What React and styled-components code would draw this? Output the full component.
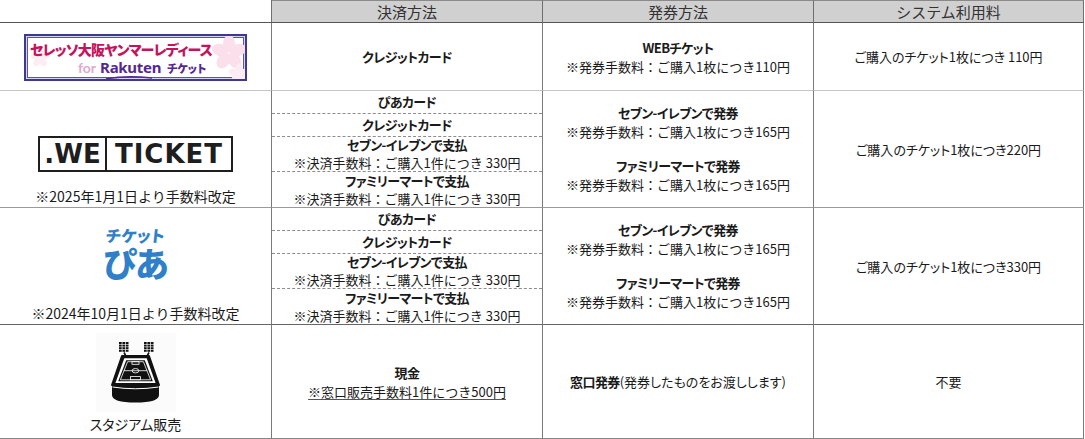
import React from "react";
import styled, { createGlobalStyle } from "styled-components";

const GlobalStyle = createGlobalStyle`
  body {
    margin: 0;
    background: #fff;
    font-family: "Noto Sans CJK JP", "Noto Sans", sans-serif;
    font-feature-settings: "palt";
    color: #1a1a1a;
  }
`;

const Table = styled.div`
  display: grid;
  grid-template-columns: 272px 271px 271px 270px;
  grid-template-rows: 23px 68px 117px 117px 114px;
  width: 1084px;
`;

const HeadCell = styled.div`
  box-sizing: border-box;
  display: flex;
  align-items: center;
  justify-content: center;
  font-size: 15px;
  font-feature-settings: normal;
  color: #333;
  background: ${(p) => (p.$blank ? "#fff" : "#d0d0d0")};
  border-top: ${(p) => (p.$blank ? "none" : "1px solid #8a8a8a")};
  border-right: 1px solid #6f6f6f;
  border-bottom: 1px solid #555;
`;

const Cell = styled.div`
  box-sizing: border-box;
  display: flex;
  flex-direction: column;
  align-items: center;
  justify-content: center;
  gap: ${(p) => p.$gap || 0}px;
  border-right: 1px solid #7a7a7a;
  border-bottom: 1px solid ${(p) => p.$line || "#888"};
  font-size: 13px;
  line-height: ${(p) => p.$lh || 19}px;
  text-align: center;
`;

const LogoCell = styled(Cell)`
  justify-content: flex-end;
  padding-bottom: ${(p) => p.$pb || 2}px;
  line-height: 18px;
`;

const SubList = styled.div`
  box-sizing: border-box;
  display: flex;
  flex-direction: column;
  border-right: 1px solid #7a7a7a;
  border-bottom: 1px solid ${(p) => p.$line || "#888"};
  font-size: 13px;
  line-height: 18px;
  text-align: center;
`;

const SubRow = styled.div`
  height: ${(p) => p.$h}px;
  box-sizing: border-box;
  display: flex;
  flex-direction: column;
  justify-content: center;
  border-top: ${(p) => (p.$first ? "none" : "1px dashed #8c8c8c")};
`;

const Block = styled.div`
  display: flex;
  flex-direction: column;
`;

const Strong = styled.span`
  font-weight: 700;
  letter-spacing: -0.6px;
`;

const Note = styled.span`
  font-feature-settings: normal;
  text-decoration: ${(p) => (p.$underline ? "underline" : "none")};
  text-decoration-color: #555;
  text-underline-offset: 2px;
`;

const Caption = styled.div`
  font-size: 14px;
  font-feature-settings: ${(p) => (p.$tight ? '"palt"' : "normal")};
`;

/* Cerezo x Rakuten logo */
const CerezoBox = styled.div`
  position: relative;
  width: 223px;
  height: 47px;
  box-sizing: border-box;
  border: 2px solid #3d3990;
  box-shadow: inset 0 0 0 1px #d8d3f3, inset 0 0 0 2px #5b50b3;
  background: #fff;
  overflow: hidden;
  margin-top: 2px;
`;

const CerezoInner = styled.div`
  position: relative;
  z-index: 1;
  padding: 5px 0 0 4px;
  text-align: left;
`;

const CerezoTitle = styled.div`
  font-size: 14px;
  line-height: 16px;
  font-weight: 900;
  color: #c4145c;
  letter-spacing: -0.8px;
`;

const CerezoSub = styled.div`
  display: flex;
  align-items: baseline;
  gap: 4px;
  padding-left: 48px;
  line-height: 21px;
`;

const ForText = styled.span`
  font-family: "Lato", "Noto Sans", sans-serif;
  font-weight: 700;
  font-size: 14px;
  color: #e2a8cf;
`;

const RakutenText = styled.span`
  position: relative;
  font-family: "Noto Sans", "Lato", sans-serif;
  font-weight: 700;
  font-size: 15px;
  color: #55288f;
  letter-spacing: -0.3px;
`;

const RakutenTicket = styled.span`
  font-size: 11px;
  font-weight: 900;
  color: #55288f;
  margin-left: 2px;
`;

const Blossom = styled.svg`
  position: absolute;
  top: 0;
  left: 0;
  z-index: 0;
`;

const Swoosh = styled.svg`
  position: absolute;
  left: 4px;
  bottom: -3px;
`;

const Petals = ({ cx, cy, r, fill }) => (
  <g>
    {[0, 72, 144, 216, 288].map((a) => (
      <ellipse
        key={a}
        cx={cx}
        cy={cy - r * 0.55}
        rx={r * 0.36}
        ry={r * 0.5}
        fill={fill}
        transform={`rotate(${a} ${cx} ${cy})`}
      />
    ))}
  </g>
);

const CerezoLogo = () => (
  <CerezoBox>
    <Blossom width="223" height="47" viewBox="0 0 223 47">
      <Petals cx={203} cy={17} r={17} fill="#fbe0ec" />
      <Petals cx={213} cy={38} r={10} fill="#fcebf2" />
      <Petals cx={14} cy={22} r={9} fill="#fcedf3" />
    </Blossom>
    <CerezoInner>
      <CerezoTitle>セレッソ大阪ヤンマーレディース</CerezoTitle>
      <CerezoSub>
        <ForText>for</ForText>
        <RakutenText>
          Rakuten
          <Swoosh width="50" height="6" viewBox="0 0 50 6">
            <path d="M2 4 Q 22 0 48 3" stroke="#55288f" strokeWidth="1.4" fill="none" />
          </Swoosh>
        </RakutenText>
        <RakutenTicket>チケット</RakutenTicket>
      </CerezoSub>
    </CerezoInner>
  </CerezoBox>
);

/* WE TICKET logo */
const WeBox = styled.div`
  display: flex;
  height: 36px;
  box-sizing: border-box;
  border: 2px solid #1e1e1e;
  margin-bottom: 15px;
  font-family: "DejaVu Sans", "Lato", sans-serif;
  font-weight: 700;
  font-size: 26px;
  line-height: 32px;
  color: #1e1e1e;
`;

const WePart = styled.div`
  width: ${(p) => p.$w}px;
  box-sizing: border-box;
  text-align: center;
  letter-spacing: ${(p) => p.$ls || 0}px;
  border-left: ${(p) => (p.$divider ? "2px solid #1e1e1e" : "none")};
`;

/* ticket pia logo */
const PiaLogo = styled.div`
  display: flex;
  flex-direction: column;
  align-items: center;
  margin-bottom: 22px;
  color: #2f7fca;
  font-weight: 900;
`;

const PiaSmall = styled.div`
  font-size: 16px;
  line-height: 18px;
  letter-spacing: 0.5px;
  transform: skewX(-6deg);
`;

const PiaBig = styled.div`
  font-size: 34px;
  line-height: 38px;
  letter-spacing: -1px;
`;

/* stadium icon */
const IconBox = styled.div`
  width: 80px;
  height: 79px;
  background: #fbfbfb;
  margin-bottom: 3px;
`;

const LightGrid = ({ x, y }) => (
  <g>
    {[0, 1, 2, 3].map((r) =>
      [0, 1, 2].map((c) => (
        <rect key={`${r}-${c}`} x={x + c * 3.4} y={y + r * 2.6} width="2.7" height="2" fill="#111" />
      ))
    )}
  </g>
);

const StadiumIcon = () => (
  <IconBox>
    <svg width="80" height="79" viewBox="0 0 80 79">
      <LightGrid x={23} y={9} />
      <LightGrid x={48} y={9} />
      <path d="M28 19.5 L31 25" stroke="#111" strokeWidth="1.6" />
      <path d="M53 19.5 L50 25" stroke="#111" strokeWidth="1.6" />
      <path
        d="M16 52 L63 52 L63 62 Q63 69.5 39.5 69.5 Q16 69.5 16 62 Z"
        fill="#111"
      />
      <polygon
        points="26,23 53,23 63,52 16,52"
        fill="#111"
        stroke="#111"
        strokeWidth="2"
        strokeLinejoin="round"
      />
      <path d="M16.5 54 Q39.5 57.5 62.5 54" stroke="#fff" strokeWidth="1" fill="none" />
      <polygon points="28.3,25.3 50.7,25.3 59.6,50 19.4,50" fill="#fff" />
      <polygon points="30.2,27.2 48.8,27.2 56.8,48.2 22.2,48.2" fill="#111" />
      <polygon points="31.6,28.7 47.4,28.7 54.6,46.8 24.4,46.8" fill="none" stroke="#fff" strokeWidth="0.8" />
      <line x1="27.8" y1="37.7" x2="51.2" y2="37.7" stroke="#fff" strokeWidth="0.8" />
      <ellipse cx="39.5" cy="37.7" rx="3.4" ry="2.2" fill="none" stroke="#fff" strokeWidth="0.8" />
      <rect x="36" y="28.7" width="7" height="2.6" fill="none" stroke="#fff" strokeWidth="0.8" />
      <rect x="34.5" y="43.6" width="10" height="3.2" fill="none" stroke="#fff" strokeWidth="0.8" />
    </svg>
  </IconBox>
);

const PayFeeRows = () => (
  <>
    <SubRow $h={22} $first>
      <Strong>ぴあカード</Strong>
    </SubRow>
    <SubRow $h={24}>
      <Strong>クレジットカード</Strong>
    </SubRow>
    <SubRow $h={35}>
      <Strong>セブン-イレブンで支払</Strong>
      <Note>※決済手数料：ご購入1件につき 330円</Note>
    </SubRow>
    <SubRow $h={36}>
      <Strong>ファミリーマートで支払</Strong>
      <Note>※決済手数料：ご購入1件につき 330円</Note>
    </SubRow>
  </>
);

const StoreIssue = () => (
  <>
    <Block>
      <Strong>セブン-イレブンで発券</Strong>
      <Note>※発券手数料：ご購入1枚につき165円</Note>
    </Block>
    <Block>
      <Strong>ファミリーマートで発券</Strong>
      <Note>※発券手数料：ご購入1枚につき165円</Note>
    </Block>
  </>
);

export default function App() {
  return (
    <>
      <GlobalStyle />
      <Table>
        <HeadCell $blank />
        <HeadCell>決済方法</HeadCell>
        <HeadCell>発券方法</HeadCell>
        <HeadCell>システム利用料</HeadCell>

        <Cell $line="#c4c4c4">
          <CerezoLogo />
        </Cell>
        <Cell $line="#c4c4c4">
          <Strong>クレジットカード</Strong>
        </Cell>
        <Cell $line="#c4c4c4">
          <Strong>WEBチケット</Strong>
          <Note>※発券手数料：ご購入1枚につき110円</Note>
        </Cell>
        <Cell $line="#c4c4c4">ご購入のチケット1枚につき 110円</Cell>

        <LogoCell $line="#9a9a9a">
          <WeBox>
            <WePart $w={65}>.WE</WePart>
            <WePart $w={126} $ls={1} $divider>TICKET</WePart>
          </WeBox>
          <Caption>※2025年1月1日より手数料改定</Caption>
        </LogoCell>
        <SubList $line="#9a9a9a">
          <PayFeeRows />
        </SubList>
        <Cell $line="#9a9a9a" $lh={18.5} $gap={16}>
          <StoreIssue />
        </Cell>
        <Cell $line="#9a9a9a">ご購入のチケット1枚につき220円</Cell>

        <LogoCell $line="#666">
          <PiaLogo>
            <PiaSmall>チケット</PiaSmall>
            <PiaBig>ぴあ</PiaBig>
          </PiaLogo>
          <Caption>※2024年10月1日より手数料改定</Caption>
        </LogoCell>
        <SubList $line="#666">
          <PayFeeRows />
        </SubList>
        <Cell $line="#666" $lh={18.5} $gap={16}>
          <StoreIssue />
        </Cell>
        <Cell $line="#666">ご購入のチケット1枚につき330円</Cell>

        <LogoCell $line="#888" $pb={5}>
          <StadiumIcon />
          <Caption $tight>スタジアム販売</Caption>
        </LogoCell>
        <Cell $line="#888">
          <Strong>現金</Strong>
          <Note $underline>※窓口販売手数料1件につき500円</Note>
        </Cell>
        <Cell $line="#888">
          <span>
            <Strong>窓口発券</Strong>(発券したものをお渡しします)
          </span>
        </Cell>
        <Cell $line="#888">不要</Cell>
      </Table>
    </>
  );
}
